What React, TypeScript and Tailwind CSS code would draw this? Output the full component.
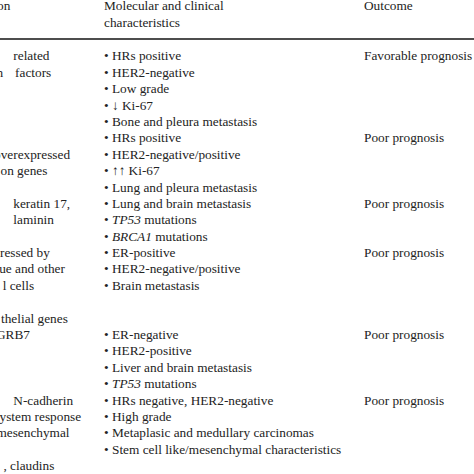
import React from 'react'

type Group = {
  desc: React.ReactNode[]
  traits: React.ReactNode[]
  outcome: string
}

const groups: Group[] = [
  {
    desc: [
      <span className="inline-block pl-[13.3px]">related</span>,
      <>
        <span className="inline-block -ml-[3.6px]">n</span>
        <span className="inline-block ml-[12px]">factors</span>
      </>,
    ],
    traits: [
      'HRs positive',
      'HER2-negative',
      'Low grade',
      '↓ Ki-67',
      'Bone and pleura metastasis',
    ],
    outcome: 'Favorable prognosis',
  },
  {
    desc: [
      null,
      <span className="inline-block -ml-[6px]">overexpressed</span>,
      <span className="inline-block pl-[0.5px]">on genes</span>,
    ],
    traits: [
      'HRs positive',
      'HER2-negative/positive',
      '↑↑ Ki-67',
      'Lung and pleura metastasis',
    ],
    outcome: 'Poor prognosis',
  },
  {
    desc: [
      <span className="inline-block pl-[13.3px]">keratin 17,</span>,
      <span className="inline-block pl-[13.3px]">laminin</span>,
    ],
    traits: [
      'Lung and brain metastasis',
      <>
        <i>TP53</i> mutations
      </>,
      <>
        <i>BRCA1</i> mutations
      </>,
    ],
    outcome: 'Poor prognosis',
  },
  {
    desc: [
      <span className="inline-block">ressed by</span>,
      <span className="inline-block -ml-[6px]">sue and other</span>,
      <span className="inline-block pl-[2.7px]">l cells</span>,
      null,
      <span className="inline-block pl-[1px]">thelial genes</span>,
    ],
    traits: ['ER-positive', 'HER2-negative/positive', 'Brain metastasis'],
    outcome: 'Poor prognosis',
  },
  {
    desc: [<span className="inline-block -ml-[4px]">GRB7</span>],
    traits: [
      'ER-negative',
      'HER2-positive',
      'Liver and brain metastasis',
      <>
        <i>TP53</i> mutations
      </>,
    ],
    outcome: 'Poor prognosis',
  },
  {
    desc: [
      <span className="inline-block pl-[13.3px]">N-cadherin</span>,
      <span className="inline-block -ml-[0.5px]">ystem response</span>,
      <span className="inline-block -ml-[3.6px]">mesenchymal</span>,
      null,
      <span className="inline-block pl-[3.4px]">, claudins</span>,
    ],
    traits: [
      'HRs negative, HER2-negative',
      'High grade',
      'Metaplasic and medullary carcinomas',
      'Stem cell like/mesenchymal characteristics',
    ],
    outcome: 'Poor prognosis',
  },
]

const Line = ({ children }: { children?: React.ReactNode }) => (
  <div className="h-[16.4px] whitespace-nowrap">{children}</div>
)

const App = () => {
  return (
    <div className="w-[474px] h-[474px] overflow-hidden bg-white text-[#232323] font-['Liberation_Serif','Times_New_Roman',serif] text-[13.3px] leading-[16.4px]">
      <div className="grid grid-cols-[104px_260px_110px] -mt-[1.7px]">
        <div>
          <Line>
            <span className="inline-block -ml-[3px]">on</span>
          </Line>
        </div>
        <div>
          <Line>Molecular and clinical</Line>
          <Line>characteristics</Line>
        </div>
        <div>
          <Line>Outcome</Line>
        </div>
      </div>

      <div className="mt-[7px] h-[2px] bg-[#4e4e4e]" />

      <div className="mt-[8.3px]">
        {groups.map((group, i) => (
          <div key={i} className="grid grid-cols-[104px_260px_110px]">
            <div className="overflow-hidden">
              {group.desc.map((d, j) => (
                <Line key={j}>{d}</Line>
              ))}
            </div>
            <div>
              {group.traits.map((t, j) => (
                <Line key={j}>• {t}</Line>
              ))}
            </div>
            <div>
              <Line>{group.outcome}</Line>
            </div>
          </div>
        ))}
      </div>
    </div>
  )
}

export default App
